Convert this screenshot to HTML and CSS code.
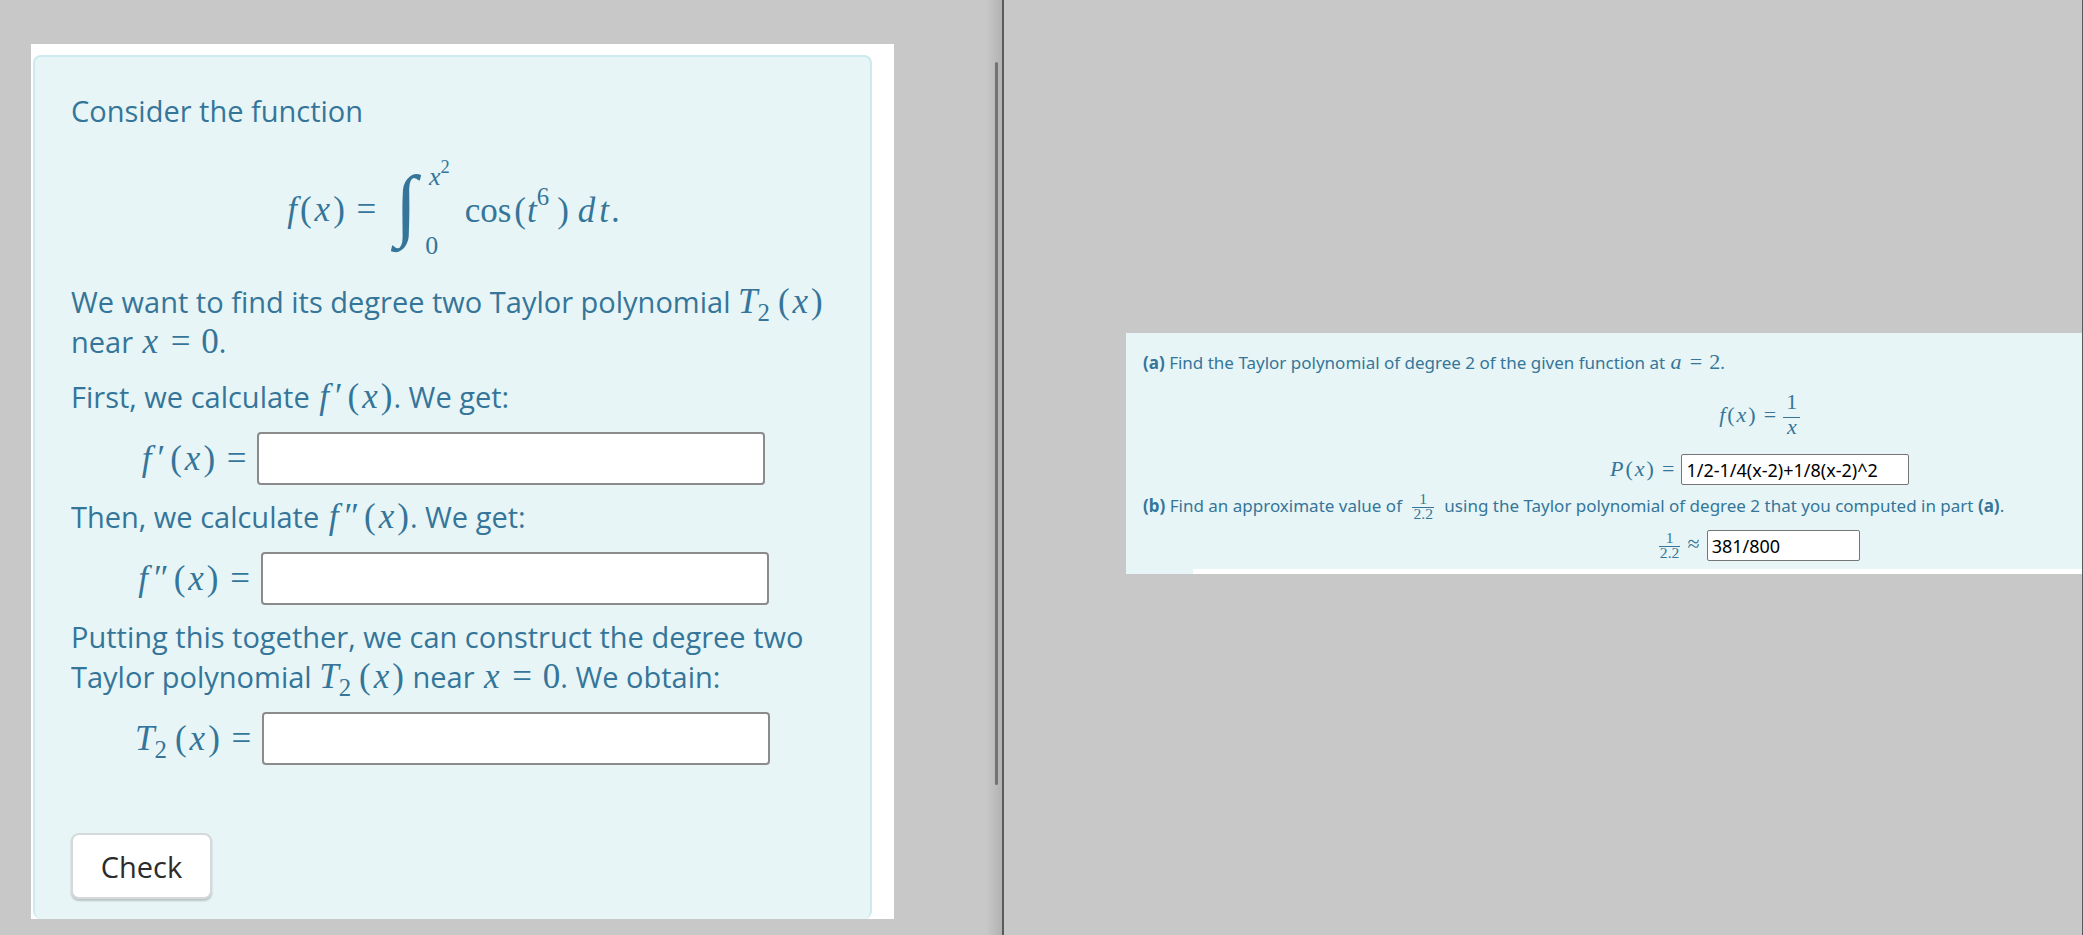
FILE: index.html
```html
<!DOCTYPE html>
<html lang="en">
<head>
    <meta charset="UTF-8">
    <meta name="viewport" content="width=device-width, initial-scale=1.0">
    <title>Taylor Polynomials</title>
    <link rel="stylesheet" href="styles.css">
</head>
<body>
    <main class="split">
        <section class="pane pane-left">
            <div class="frame">
                <form class="question">
                    <p>Consider the function</p>
                    <div class="formula">
                        <math><mi>f</mi><mo stretchy="false">(</mo><mi>x</mi><mo stretchy="false">)</mo><mo>=</mo></math>
                        <span class="integral">∫</span>
                        <span class="limits">
                            <math class="upper"><msup><mi>x</mi><mn>2</mn></msup></math>
                            <math><mn>0</mn></math>
                        </span>
                        <math class="integrand"><mi class="fn">cos</mi><mo stretchy="false">(</mo><msup><mi>t</mi><mn>6</mn></msup><mo stretchy="false">)</mo><mspace width="6px"></mspace><mi>d</mi><mi>t</mi><mn>.</mn></math>
                    </div>
                    <p>We want to find its degree two Taylor polynomial <math><msub><mi>T</mi><mn>2</mn></msub><mo stretchy="false">(</mo><mi>x</mi><mo stretchy="false">)</mo></math> near <math><mi>x</mi><mo>=</mo><mn>0</mn></math>.</p>

                    <p>First, we calculate <math><mi>f</mi><mn class="prime">′</mn><mo stretchy="false">(</mo><mi>x</mi><mo stretchy="false">)</mo></math>. We get:</p>
                    <div class="answer">
                        <label for="first"><math><mi>f</mi><mn class="prime">′</mn><mo stretchy="false">(</mo><mi>x</mi><mo stretchy="false">)</mo><mo>=</mo></math></label>
                        <input type="text" id="first">
                    </div>

                    <p>Then, we calculate <math><mi>f</mi><mn class="prime">″</mn><mo stretchy="false">(</mo><mi>x</mi><mo stretchy="false">)</mo></math>. We get:</p>
                    <div class="answer">
                        <label for="second"><math><mi>f</mi><mn class="prime">″</mn><mo stretchy="false">(</mo><mi>x</mi><mo stretchy="false">)</mo><mo>=</mo></math></label>
                        <input type="text" id="second">
                    </div>

                    <p>Putting this together, we can construct the degree two Taylor polynomial <math><msub><mi>T</mi><mn>2</mn></msub><mo stretchy="false">(</mo><mi>x</mi><mo stretchy="false">)</mo></math> near <math><mi>x</mi><mo>=</mo><mn>0</mn></math>. We obtain:</p>
                    <div class="answer">
                        <label for="taylor"><math><msub><mi>T</mi><mn>2</mn></msub><mo stretchy="false">(</mo><mi>x</mi><mo stretchy="false">)</mo><mo>=</mo></math></label>
                        <input type="text" id="taylor">
                    </div>

                    <button type="button" class="check-button">Check</button>
                </form>
            </div>
            <div class="scroll-thumb"></div>
        </section>

        <section class="pane pane-right">
            <div class="panel">
                <form class="solution">
                    <p><b>(a)</b> Find the Taylor polynomial of degree 2 of the given function at <math><mi>a</mi><mo>=</mo><mn>2</mn></math>.</p>
                    <div class="formula">
                        <math display="block" class="display-frac"><mi>f</mi><mo stretchy="false">(</mo><mi>x</mi><mo stretchy="false">)</mo><mo>=</mo><mfrac><mn>1</mn><mi>x</mi></mfrac></math>
                    </div>
                    <div class="answer">
                        <label for="poly"><math><mi>P</mi><mo stretchy="false">(</mo><mi>x</mi><mo stretchy="false">)</mo><mo>=</mo></math></label>
                        <input type="text" id="poly" value="1/2-1/4(x-2)+1/8(x-2)^2">
                    </div>
                    <p class="part-b"><b>(b)</b> Find an approximate value of <math class="inline-frac"><mfrac><mn>1</mn><mn>2.2</mn></mfrac></math> using the Taylor polynomial of degree 2 that you computed in part <b>(a)</b>.</p>
                    <div class="answer">
                        <label for="approx"><math><mfrac><mn>1</mn><mn>2.2</mn></mfrac><mo>≈</mo></math></label>
                        <input type="text" id="approx" class="short" value="381/800">
                    </div>
                </form>
                <div class="strip"></div>
            </div>
        </section>
    </main>
</body>
</html>
```
FILE: styles.css
```css
/* Reset */
* {
    margin: 0;
    padding: 0;
    box-sizing: border-box;
}

body {
    font-family: 'Open Sans', 'Noto Sans', sans-serif;
    background-color: #c8c8c8;
    color: #35759a;
}

/* Math */
math {
    font-family: 'Liberation Serif', serif;
    font-size: 35px;
}

mi {
    padding: 0 2px;
    font-style: italic;
    text-transform: none;
}

.fn {
    font-style: normal;
}

mo {
    padding: 0 1px;
}

.prime {
    padding: 0 4px;
}

msub > mi,
msup > mi {
    padding: 0;
}

/* Two panes side by side */
.split {
    display: grid;
    grid-template-columns: 1004fr 1079fr;
    min-height: 100vh;
}

.pane-left {
    display: flex;
    align-items: flex-start;
    justify-content: space-between;
    padding: 44px 4px 16px 31px;
    border-right: 2px solid #5a5a5a;
    background: linear-gradient(to left, #b2b2b2, #c8c8c8 16px);
}

.frame {
    flex: 1;
    background-color: #ffffff;
    padding: 11px 22px 0 2px;
    margin-right: 101px;
}

.scroll-thumb {
    width: 3px;
    height: 723px;
    margin-top: 18px;
    border-radius: 2px;
    background-color: #737373;
}

/* Left question */
.question {
    padding: 34px 36px 20px;
    border: 2px solid #cbebf0;
    border-bottom: none;
    border-radius: 8px;
    background-color: #e7f5f6;
    font-size: 29px;
    line-height: 40px;
}

.question p {
    margin-bottom: 15px;
}

.formula {
    display: flex;
    align-items: center;
    justify-content: center;
}

.question .formula {
    height: 136px;
    padding-bottom: 4px;
}

.integral {
    padding: 0 0 16px 8px;
    font-family: 'Liberation Serif', serif;
    font-size: 80px;
    line-height: 80px;
}

.limits {
    display: flex;
    flex-direction: column;
    justify-content: space-between;
    height: 94px;
    margin: 0 8px 10px -8px;
}

.limits math {
    font-size: 26px;
}

.limits .upper {
    margin-left: 20px;
}

.integrand {
    padding-bottom: 6px;
}

.answer {
    display: flex;
    align-items: center;
    justify-content: center;
}

.question .answer {
    margin-bottom: 12px;
}

input {
    width: 228px;
    height: 31px;
    padding: 0 4px;
    border: 1px solid #767676;
    border-radius: 2px;
    background-color: #ffffff;
    color: #000000;
    font-family: inherit;
    font-size: 18px;
}

.question input {
    width: 508px;
    height: 53px;
    border: 2px solid #8b8b8b;
    border-radius: 4px;
    font-size: 29px;
}

.check-button {
    display: block;
    width: 141px;
    height: 66px;
    margin-top: 68px;
    border: 2px solid #d5d9da;
    border-radius: 8px;
    background-color: #ffffff;
    box-shadow: 0 2px 2px rgba(0, 0, 0, 0.2);
    color: #2b2b2b;
    font-family: inherit;
    font-size: 29px;
    cursor: pointer;
}

/* Right question */
.pane-right {
    padding: 333px 0 0 122px;
    border-right: 1px solid #5a5a5a;
}

.panel {
    overflow: hidden;
    background-color: #e7f5f6;
}

/* Wider than the panel, which cuts it off at the right */
.solution {
    width: 133%;
    padding: 18px 22px 8px 17px;
    font-family: 'Noto Sans', 'Open Sans', sans-serif;
    font-size: 17px;
    line-height: 24px;
}

.solution math {
    font-size: 22px;
}

.solution mi,
.solution mo {
    padding: 0 1px;
}

.solution mfrac > * {
    padding: 1px;
}

.solution .display-frac mfrac > * {
    padding: 4px 3px;
}

.solution .inline-frac {
    margin: 0 6px;
}

.solution .formula {
    height: 79px;
}

.solution .part-b {
    margin: 8px 0 10px;
}

.solution input.short {
    width: 153px;
}

.strip {
    height: 5px;
    margin-left: 67px;
    background-color: #ffffff;
}
```
